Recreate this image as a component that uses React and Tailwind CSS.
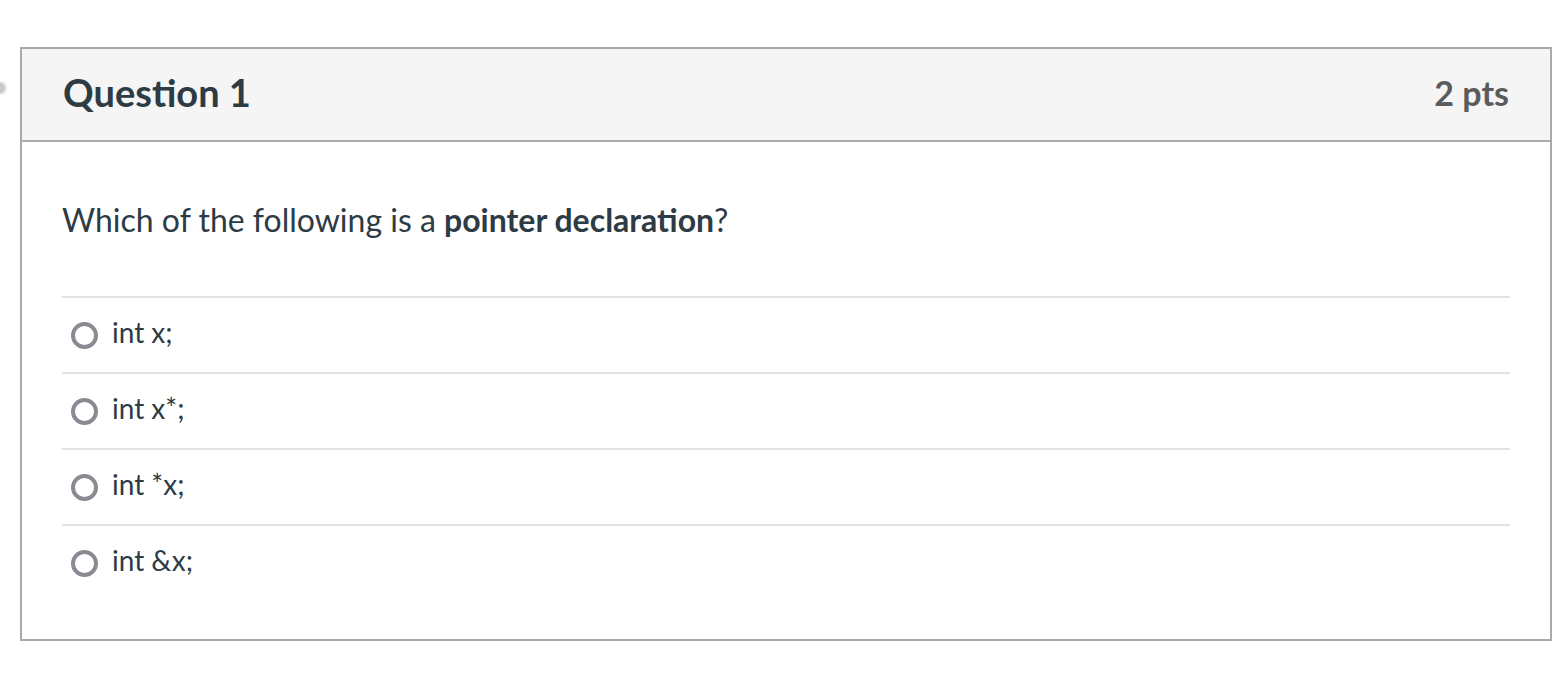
import React from "react";

const answers = ["int x;", "int x*;", "int *x;", "int &x;"];

const Radio = () => (
  <span className="ml-[9px] mr-[14px] box-border block h-[27px] w-[27px] shrink-0 rounded-full border-4 border-[#8b8a92] bg-white" />
);

export default function App() {
  return (
    <div
      className="relative h-[674px] w-[1552px] overflow-hidden bg-white pl-[20px] pt-[47px]"
      style={{ fontFamily: "Lato, 'Open Sans', sans-serif" }}
    >
      {/* partial dot cut off at left edge */}
      <span className="absolute left-[-6px] top-[82px] h-[12px] w-[12px] rounded-full bg-[#c4c8cc] blur-[1px]" />

      <div className="w-[1532px] border-2 border-[#aaaaaa]">
        <div className="flex h-[93px] items-center justify-between border-b-2 border-[#aaaaaa] bg-[#f5f5f5] px-[41px] pb-[6px]">
          <h2 className="text-[38px] font-bold leading-none text-[#2d3b45]">Question 1</h2>
          <span className="pt-[2px] text-[34px] font-bold leading-none text-[#5b5b5b]">2 pts</span>
        </div>

        <div className="px-[40px] pb-[39px]">
          <p className="pt-[55px] pb-[53px] text-[32px] leading-[46px] text-[#2d3b45]">
            Which of the following is a <b className="font-bold">pointer declaration</b>?
          </p>

          <div>
            {answers.map((a) => (
              <div
                key={a}
                className="flex h-[76px] items-center border-t-2 border-[#e2e2e2] text-[28px] text-[#2d3b45]"
              >
                <Radio />
                <span className="pb-[6px]">{a}</span>
              </div>
            ))}
          </div>
        </div>
      </div>
    </div>
  );
}
